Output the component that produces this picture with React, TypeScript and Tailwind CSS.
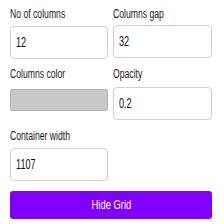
import { useState } from 'react';

const font = { fontFamily: '"Liberation Sans", Arial, sans-serif' };

function Label({ children }: { children: string }) {
  return (
    <div className="h-[13px] text-[12px] leading-[13px] text-[#1a1a1a] whitespace-nowrap">
      <span className="inline-block origin-left scale-x-[0.72]">{children}</span>
    </div>
  );
}

function NumberField({ value, className }: { value: string; className?: string }) {
  return (
    <div
      className={`flex items-center h-[33px] px-[5px] bg-white border border-[#cfcfcf] rounded-[4px] text-[14px] text-[#111] ${className ?? ''}`}
    >
      <span className="inline-block origin-left scale-x-[0.65]">{value}</span>
    </div>
  );
}

export default function App() {
  const [showGrid, setShowGrid] = useState(true);

  return (
    <div className="w-[224px] h-[224px] bg-white pt-[8px] pl-[10px] pr-[12px]" style={font}>
      <div className="grid grid-cols-[98px_99px] gap-x-[5px]">
        <div>
          <Label>No of columns</Label>
          <NumberField value="12" className="mt-[5px]" />
        </div>
        <div>
          <Label>Columns gap</Label>
          <NumberField value="32" className="mt-[4px]" />
        </div>

        <div className="mt-[9px]">
          <Label>Columns color</Label>
          <div className="mt-[8px] h-[22px] bg-[#c8c8c8] border border-[#b0b0b0] rounded-[2px]" />
        </div>
        <div className="mt-[9px]">
          <Label>Opacity</Label>
          <NumberField value="0.2" className="mt-[6px] h-[31px]" />
        </div>

        <div className="mt-[10px]">
          <Label>Container width</Label>
          <NumberField value="1107" className="mt-[5px] h-[32px]" />
        </div>
        <div />
      </div>

      <button
        onClick={() => setShowGrid(!showGrid)}
        className="mt-[10px] w-[202px] h-[28px] bg-[#7f00ff] rounded-[3px] text-white text-[12.5px] flex items-center justify-center"
      >
        <span className="inline-block scale-x-[0.75]">{showGrid ? 'Hide Grid' : 'Show Grid'}</span>
      </button>
    </div>
  );
}
